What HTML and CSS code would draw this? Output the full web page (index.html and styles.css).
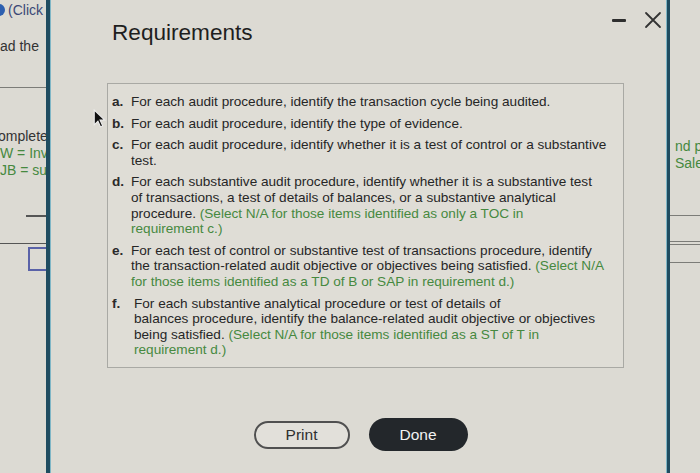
FILE: index.html
```html
<!DOCTYPE html>
<html>
<head>
<meta charset="utf-8">
<link rel="stylesheet" href="styles.css">
</head>
<body>
<div class="page">
  <aside class="left-strip">
    <div class="click-row"><span class="dot"></span><span class="click">(Click</span></div>
    <div class="frag frag-read">ad the</div>
    <div class="rule rule-full rule-87"></div>
    <div class="frag frag-complete">omplete</div>
    <div class="frag green frag-inv">W = Inv</div>
    <div class="frag green">JB = su</div>
    <div class="rule rule-short"></div>
    <div class="rule rule-full rule-245"></div>
    <div class="checkbox"></div>
  </aside>

  <main class="modal">
    <header class="modal-head">
      <h1 class="title">Requirements</h1>
      <div class="win-controls">
        <span class="minimize"></span>
        <svg class="close" width="18" height="18" viewBox="0 0 18 18"><path d="M2 2 L16 16 M16 2 L2 16" stroke="#333" stroke-width="1.8" fill="none" stroke-linecap="round"/></svg>
      </div>
    </header>

    <section class="req-box">
      <div class="item"><b class="lbl">a.</b><p>For each audit procedure, identify the transaction cycle being audited.</p></div>
      <div class="item"><b class="lbl">b.</b><p>For each audit procedure, identify the type of evidence.</p></div>
      <div class="item"><b class="lbl">c.</b><p>For each audit procedure, identify whether it is a test of control or a substantive<br>test.</p></div>
      <div class="item"><b class="lbl">d.</b><p>For each substantive audit procedure, identify whether it is a substantive test<br>of transactions, a test of details of balances, or a substantive analytical<br>procedure. <span class="green">(Select N/A for those items identified as only a TOC in<br>requirement c.)</span></p></div>
      <div class="item"><b class="lbl">e.</b><p>For each test of control or substantive test of transactions procedure, identify<br>the transaction-related audit objective or objectives being satisfied. <span class="green">(Select N/A<br>for those items identified as a TD of B or SAP in requirement d.)</span></p></div>
      <div class="item item-f"><b class="lbl">f.</b><p>For each substantive analytical procedure or test of details of<br>balances procedure, identify the balance-related audit objective or objectives<br>being satisfied. <span class="green">(Select N/A for those items identified as a ST of T in<br>requirement d.)</span></p></div>
    </section>

    <div class="actions">
      <button class="btn btn-print">Print</button>
      <button class="btn btn-done">Done</button>
    </div>

    <svg class="cursor" width="15" height="21" viewBox="0 0 14 20"><path d="M2 1 L2 15 L5.5 11.5 L8 17 L10 16 L7.5 10.5 L12 10.5 Z" fill="#111" stroke="#eee" stroke-width="1"/></svg>
  </main>

  <aside class="right-strip">
    <div class="frag green r-nd">nd p</div>
    <div class="frag green">Sales</div>
    <div class="rule rule-r1"></div>
    <div class="rule rule-r2"></div>
    <div class="rule rule-r3"></div>
    <div class="rule rule-r4"></div>
  </aside>
</div>
</body>
</html>
```

FILE: styles.css
```css
html, body {
  margin: 0;
  padding: 0;
}
body {
  background: #dcdad3;
  font-family: "Liberation Sans", Arial, sans-serif;
  color: #262626;
  width: 700px;
  height: 473px;
  overflow: hidden;
}
.page {
  display: flex;
  height: 473px;
}
.green { color: #46893f; }

/* left strip */
.left-strip {
  width: 46px;
  flex: none;
  overflow: hidden;
  font-size: 14px;
  color: #333;
}
.frag {
  white-space: nowrap;
  line-height: 17px;
  font-size: 14px;
}
.click-row {
  display: flex;
  align-items: center;
  height: 18px;
  margin-top: 1px;
  white-space: nowrap;
}
.dot {
  width: 12px;
  height: 12px;
  border-radius: 50%;
  background: #2c5fb0;
  margin-left: -7px;
  flex: none;
}
.click {
  margin-left: 3px;
  color: #3b4876;
  font-size: 14px;
}
.frag-read { margin-top: 19px; }
.rule { height: 0; border-top: 1px solid #7c7c78; }
.rule-full { width: 46px; }
.rule-87 { margin-top: 32px; }
.frag-complete { margin-top: 40px; margin-left: -2px; }
.rule-short { width: 20px; margin-left: 26px; margin-top: 36px; border-top: 2px solid #555; }
.rule-245 { margin-top: 26px; border-top-color: #555; }
.checkbox {
  width: 20px;
  height: 20px;
  margin-left: 28px;
  margin-top: 3px;
  border: 2px solid #5a62a8;
  border-right: none;
}

/* modal */
.modal {
  position: relative;
  flex: 1;
  border-left: 4px solid #1f4c60;
  border-right: 3px solid #1f4c60;
  box-shadow: inset 1px 0 0 #7fb6c6, inset -1px 0 0 #7fb6c6;
  display: flex;
  flex-direction: column;
}
.modal-head {
  display: flex;
  justify-content: space-between;
  align-items: flex-start;
  height: 83px;
}
.title {
  margin: 19px 0 0 62px;
  font-size: 22.6px;
  font-weight: normal;
  color: #1e1e1e;
  line-height: 28px;
}
.win-controls {
  display: flex;
  align-items: center;
  gap: 18px;
  margin: 11px 5px 0 0;
}
.minimize {
  width: 14px;
  height: 3px;
  background: #2e2e2e;
  border-radius: 1px;
}
.close { display: block; }

.req-box {
  margin-left: 57px;
  width: 517px;
  height: 285px;
  border: 1px solid #a9a9a4;
  background: #dfddd6;
  padding: 10px 0 0 4px;
  box-sizing: border-box;
  display: flex;
  flex-direction: column;
  gap: 6px;
}
.item {
  display: flex;
  font-size: 13.6px;
  line-height: 15.6px;
}
.lbl {
  width: 19px;
  flex: none;
  font-weight: bold;
  color: #2a2a2a;
}
.item p {
  margin: 0;
  white-space: nowrap;
}
.item-f p { margin-left: 3px; }

.actions {
  display: flex;
  justify-content: center;
  align-items: center;
  gap: 19px;
  margin-top: 50px;
  margin-left: 4px;
}
.btn {
  font-family: "Liberation Sans", Arial, sans-serif;
  font-size: 15.5px;
  cursor: pointer;
}
.btn-print {
  width: 96px;
  height: 28px;
  border-radius: 14px;
  border: 2px solid #505050;
  background: #e2e0da;
  color: #2f2f2f;
}
.btn-done {
  width: 99px;
  height: 33px;
  border-radius: 17px;
  border: none;
  background: #23272b;
  color: #f2f2f2;
}

.cursor {
  position: absolute;
  left: 42px;
  top: 109px;
}

/* right strip */
.right-strip {
  width: 30px;
  flex: none;
  overflow: hidden;
  padding-left: 5px;
  box-sizing: border-box;
}
.r-nd { margin-top: 138px; }
.rule-r1 { margin-top: 43px; margin-left: -5px; width: 40px; }
.rule-r2 { margin-top: 25px; margin-left: -5px; width: 40px; }
.rule-r3 { margin-top: 2px; margin-left: -5px; width: 40px; }
.rule-r4 { margin-top: 17px; margin-left: -5px; width: 40px; }
```
